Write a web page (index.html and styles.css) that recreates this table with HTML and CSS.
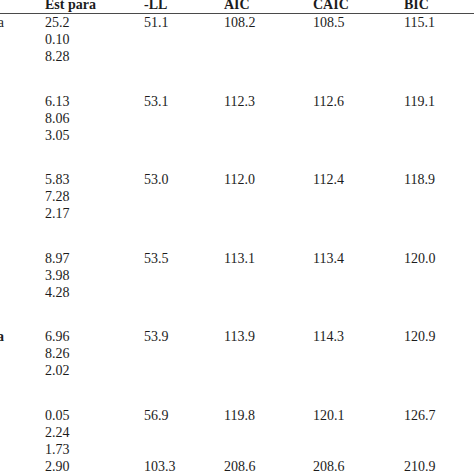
FILE: index.html
```html
<!DOCTYPE html>
<html>
<head>
<meta charset="utf-8">
<link rel="stylesheet" href="styles.css">
</head>
<body>
<div class="table">
  <div class="row head">
    <div class="lab"><span></span></div>
    <div>Est para</div>
    <div>-LL</div>
    <div>AIC</div>
    <div>CAIC</div>
    <div>BIC</div>
  </div>
  <div class="row group">
    <div class="lab"><span>Beta</span></div>
    <div class="est"><div>25.2</div><div>0.10</div><div>8.28</div></div>
    <div>51.1</div><div>108.2</div><div>108.5</div><div>115.1</div>
  </div>
  <div class="row group">
    <div class="lab"><span></span></div>
    <div class="est"><div>6.13</div><div>8.06</div><div>3.05</div></div>
    <div>53.1</div><div>112.3</div><div>112.6</div><div>119.1</div>
  </div>
  <div class="row group">
    <div class="lab"><span></span></div>
    <div class="est"><div>5.83</div><div>7.28</div><div>2.17</div></div>
    <div>53.0</div><div>112.0</div><div>112.4</div><div>118.9</div>
  </div>
  <div class="row group">
    <div class="lab"><span></span></div>
    <div class="est"><div>8.97</div><div>3.98</div><div>4.28</div></div>
    <div>53.5</div><div>113.1</div><div>113.4</div><div>120.0</div>
  </div>
  <div class="row group">
    <div class="lab bold"><span>Gamma</span></div>
    <div class="est"><div>6.96</div><div>8.26</div><div>2.02</div></div>
    <div>53.9</div><div>113.9</div><div>114.3</div><div>120.9</div>
  </div>
  <div class="row">
    <div class="lab"><span></span></div>
    <div class="est"><div>0.05</div><div>2.24</div><div>1.73</div></div>
    <div>56.9</div><div>119.8</div><div>120.1</div><div>126.7</div>
  </div>
  <div class="row">
    <div class="lab"><span></span></div>
    <div class="est"><div>2.90</div></div>
    <div>103.3</div><div>208.6</div><div>208.6</div><div>210.9</div>
  </div>
</div>
</body>
</html>
```
FILE: styles.css
```css
html, body {
  margin: 0;
  padding: 0;
  background: #ffffff;
  overflow: hidden;
}
body {
  width: 474px;
  height: 474px;
  font-family: "Liberation Serif", "Times New Roman", serif;
  font-size: 14px;
  color: #1c1c1c;
}
.table {
  display: flex;
  flex-direction: column;
}
.row {
  display: grid;
  grid-template-columns: 45px 99px 80px 89px 91px 1fr;
  line-height: 17px;
  align-items: start;
}
.head {
  font-weight: bold;
  line-height: 16px;
  margin-top: -3px;
  border-bottom: 1px solid #4a4a4a;
}
.group {
  padding-bottom: 27.6px;
}
.lab {
  width: 4px;
  display: flex;
  justify-content: flex-end;
  white-space: nowrap;
}
.bold {
  font-weight: bold;
}
```
